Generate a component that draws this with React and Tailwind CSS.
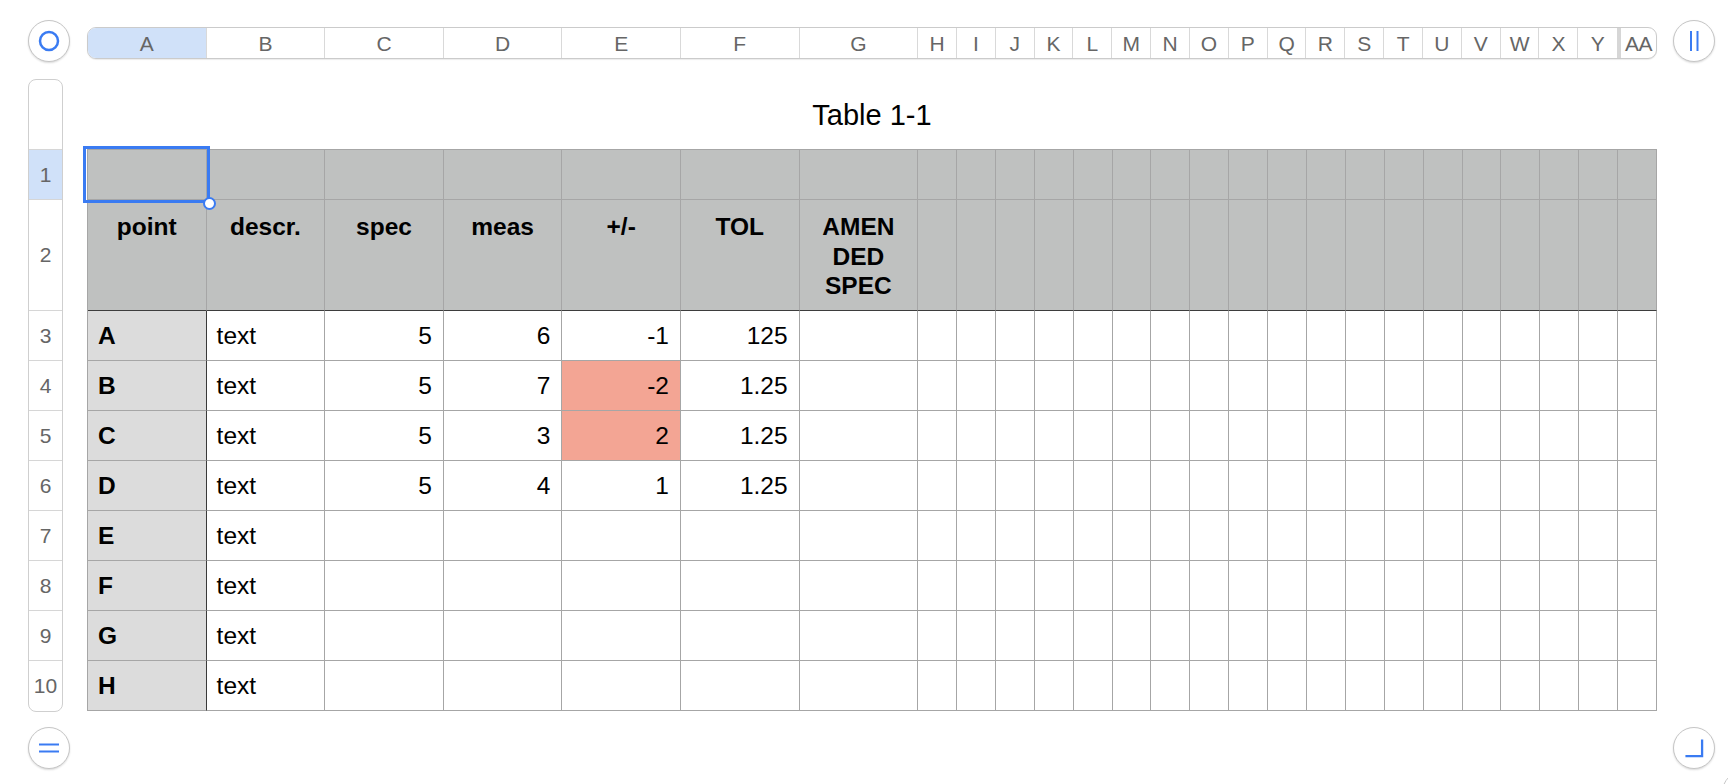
import React from 'react';

const wideCols = ['A', 'B', 'C', 'D', 'E', 'F', 'G'];
const narrowCols = ['H', 'I', 'J', 'K', 'L', 'M', 'N', 'O', 'P', 'Q', 'R', 'S', 'T', 'U', 'V', 'W', 'X', 'Y'];

// body rows 3..10
const rows = [
  { point: 'A', descr: 'text', spec: '5', meas: '6', diff: '-1', tol: '125' },
  { point: 'B', descr: 'text', spec: '5', meas: '7', diff: '-2', tol: '1.25', bad: true },
  { point: 'C', descr: 'text', spec: '5', meas: '3', diff: '2', tol: '1.25', bad: true },
  { point: 'D', descr: 'text', spec: '5', meas: '4', diff: '1', tol: '1.25' },
  { point: 'E', descr: 'text' },
  { point: 'F', descr: 'text' },
  { point: 'G', descr: 'text' },
  { point: 'H', descr: 'text' },
];

const headers = ['point', 'descr.', 'spec', 'meas', '+/-', 'TOL'];

const gridCols = 'grid grid-cols-[repeat(7,118.6px)_repeat(19,minmax(0,1fr))]';

function RoundButton({ children }) {
  return (
    <div className="w-[42px] h-[42px] rounded-full border border-[#c6c6c6] bg-white shadow-[0_1px_2px_rgba(0,0,0,0.15)] flex items-center justify-center shrink-0">
      {children}
    </div>
  );
}

function ColumnBar() {
  return (
    <div className="mt-[7px] ml-[17px] w-[1570px] h-[32px] rounded-[9px] border border-[#cbcbcb] bg-white overflow-hidden shadow-[0_1px_1px_rgba(0,0,0,0.08)]">
      <div className={`${gridCols} h-full text-[21px] text-[#666666]`}>
        {wideCols.map((c, i) => (
          <div
            key={c}
            className={`flex items-center justify-center border-r border-[#d9d9d9] ${i === 0 ? 'bg-[#d0e1f9]' : ''}`}
          >
            {c}
          </div>
        ))}
        {narrowCols.map((c, i) => (
          <div
            key={c}
            className={`flex items-center justify-center ${i === narrowCols.length - 1 ? '' : 'border-r border-[#d9d9d9]'}`}
          >
            {c}
          </div>
        ))}
        <div className="flex items-center justify-center border-l-4 border-[#d6d6d6] tracking-[-0.5px]">AA</div>
      </div>
    </div>
  );
}

function RowNumbers() {
  const cell = 'flex items-center justify-center border-b border-[#d6d6d6]';
  return (
    <div className="w-[35px] shrink-0 rounded-[8px] border border-[#cfcfcf] bg-white overflow-hidden text-[21px] text-[#666666]">
      <div className="h-[70px] border-b border-[#d6d6d6]" />
      <div className={`${cell} h-[50px] bg-[#d0e1f9]`}>1</div>
      <div className={`${cell} h-[111px]`}>2</div>
      {rows.map((_, i) => (
        <div key={i} className={`h-[50px] flex items-center justify-center ${i === rows.length - 1 ? '' : 'border-b border-[#d6d6d6]'}`}>
          {i + 3}
        </div>
      ))}
    </div>
  );
}

function Table() {
  const line = 'border-r border-b border-[#a6a6a6]';
  const empty = Array.from({ length: 19 });
  return (
    <div className="ml-[24px] w-[1570px]">
      <div className="h-[70px] pt-[19px] text-center text-[29px] leading-[34px] text-black">Table 1-1</div>
      <div className={`${gridCols} relative border-l border-t border-[#a6a6a6] text-[24.5px] text-black`}>
        {/* header row 1 */}
        {Array.from({ length: 26 }).map((_, i) => (
          <div key={`h1-${i}`} className={`h-[50px] bg-[#bfc1c0] ${line}`} />
        ))}
        {/* header row 2 */}
        {headers.map(h => (
          <div key={h} className="h-[111px] bg-[#bfc1c0] border-r border-[#a6a6a6] border-b border-b-[#3d3d3d] pt-[12px] text-center font-bold leading-[29px]">
            {h}
          </div>
        ))}
        <div className="h-[111px] bg-[#bfc1c0] border-r border-[#a6a6a6] border-b border-b-[#3d3d3d] pt-[12px] text-center font-bold leading-[29.5px]">
          AMEN<br />DED<br />SPEC
        </div>
        {empty.map((_, i) => (
          <div key={`h2-${i}`} className="h-[111px] bg-[#bfc1c0] border-r border-[#a6a6a6] border-b border-b-[#3d3d3d]" />
        ))}
        {/* body */}
        {rows.map((r, ri) => (
          <React.Fragment key={ri}>
            <div className="h-[50px] bg-[#dcdcdc] border-r border-r-[#3a3a3a] border-b border-[#a6a6a6] flex items-center pl-[10px] pt-[2px] font-bold">
              {r.point}
            </div>
            <div className={`h-[50px] ${line} flex items-center pl-[10px] pt-[2px]`}>{r.descr}</div>
            <div className={`h-[50px] ${line} flex items-center justify-end pr-[11px] pt-[2px]`}>{r.spec}</div>
            <div className={`h-[50px] ${line} flex items-center justify-end pr-[11px] pt-[2px]`}>{r.meas}</div>
            <div className={`h-[50px] ${line} flex items-center justify-end pr-[11px] pt-[2px] ${r.bad ? 'bg-[#f3a594]' : ''}`}>{r.diff}</div>
            <div className={`h-[50px] ${line} flex items-center justify-end pr-[11px] pt-[2px]`}>{r.tol}</div>
            <div className={`h-[50px] ${line}`} />
            {empty.map((_, i) => (
              <div key={i} className={`h-[50px] ${line}`} />
            ))}
          </React.Fragment>
        ))}
        {/* selection of A1 */}
        <div className="absolute left-[-5px] top-[-4px] w-[127px] h-[57px] border-[3px] border-[#3a7bf2]" />
        <div className="absolute left-[115px] top-[47px] w-[13px] h-[13px] rounded-full bg-white border-[2.5px] border-[#3a7bf2]" />
      </div>
    </div>
  );
}

export default function App() {
  return (
    <div className="relative w-[1728px] h-[784px] bg-white overflow-hidden font-['Liberation_Sans',Arial,sans-serif]">
      {/* top: column letters */}
      <div className="flex items-start pt-[20px] pl-[28px]">
        <RoundButton>
          <svg width="22" height="22" viewBox="0 0 22 22">
            <circle cx="11" cy="11" r="9" fill="none" stroke="#3a7bf2" strokeWidth="2.5" />
          </svg>
        </RoundButton>
        <ColumnBar />
        <div className="ml-[16px]">
          <RoundButton>
            <svg width="12" height="22" viewBox="0 0 12 22">
              <line x1="3" y1="1" x2="3" y2="21" stroke="#3a7bf2" strokeWidth="2" />
              <line x1="9.5" y1="1" x2="9.5" y2="21" stroke="#3a7bf2" strokeWidth="2" />
            </svg>
          </RoundButton>
        </div>
      </div>

      {/* rows + table */}
      <div className="flex items-start mt-[17px] pl-[28px]">
        <RowNumbers />
        <Table />
      </div>

      {/* bottom controls */}
      <div className="flex justify-between mt-[15px] pl-[28px] pr-[13px]">
        <RoundButton>
          <svg width="22" height="12" viewBox="0 0 22 12">
            <line x1="1" y1="2.5" x2="21" y2="2.5" stroke="#3a7bf2" strokeWidth="2" />
            <line x1="1" y1="9.5" x2="21" y2="9.5" stroke="#3a7bf2" strokeWidth="2" />
          </svg>
        </RoundButton>
        <RoundButton>
          <svg width="42" height="42" viewBox="0 0 42 42">
            <path d="M12 29.5 H29.5 V12" fill="none" stroke="#3a7bf2" strokeWidth="2.4" />
          </svg>
        </RoundButton>
      </div>

      {/* clipped button at the window corner */}
      <div className="absolute left-[1722px] top-[771px] w-[42px] h-[42px] rounded-full border border-[#c6c6c6] bg-white" />
    </div>
  );
}
